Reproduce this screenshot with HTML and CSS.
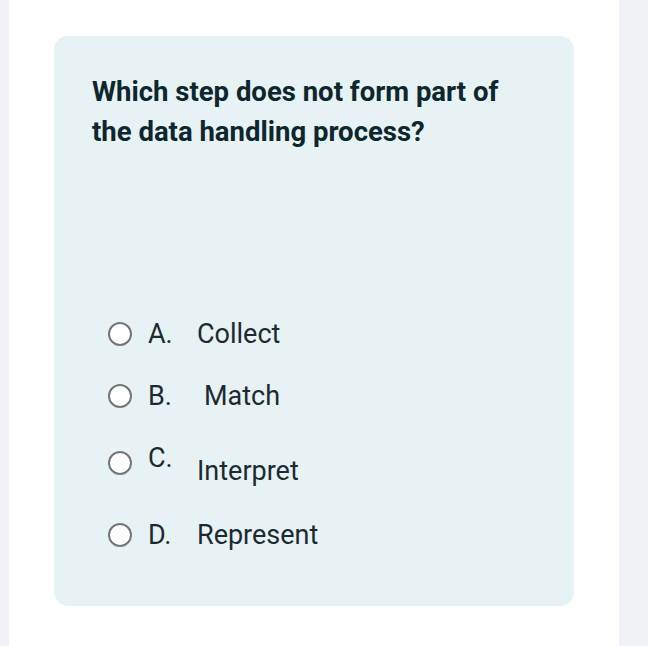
FILE: index.html
```html
<!DOCTYPE html>
<html>
<head>
<meta charset="utf-8">
<link rel="stylesheet" href="styles.css">
</head>
<body>
<div class="page">
  <div class="gutter gutter-left"></div>
  <main class="main">
    <section class="card">
      <h1 class="question">Which step does not form part of the data handling process?</h1>
      <ul class="options">
        <li class="option opt-a"><span class="radio"></span><span class="letter">A.</span><span class="label">Collect</span></li>
        <li class="option opt-b"><span class="radio"></span><span class="letter">B.</span><span class="label label-b">Match</span></li>
        <li class="option opt-c"><span class="radio"></span><span class="letter letter-c">C.</span><span class="label label-c">Interpret</span></li>
        <li class="option opt-d"><span class="radio"></span><span class="letter">D.</span><span class="label">Represent</span></li>
      </ul>
    </section>
  </main>
  <div class="gutter gutter-right"></div>
</div>
</body>
</html>
```

FILE: styles.css
```css
* { box-sizing: border-box; }
html, body { margin: 0; padding: 0; }
body {
  font-family: Roboto, "Liberation Sans", sans-serif;
  background: #ffffff;
}
.page {
  display: flex;
  width: 648px;
  height: 646px;
  overflow: hidden;
}
.gutter { background: #f1f2f6; }
.gutter-left { width: 9px; }
.gutter-right { width: 29px; }
.main {
  flex: 1;
  background: #ffffff;
  padding-top: 36px;
  padding-left: 45px;
}
.card {
  width: 520px;
  height: 570px;
  background: #e7f2f5;
  border-radius: 14px;
  padding: 36px 38px 0 38px;
}
.question {
  margin: 0;
  font-size: 27.5px;
  line-height: 40px;
  font-weight: 700;
  color: #0e262e;
  width: 430px;
}
.options {
  list-style: none;
  margin: 162px 0 0 16px;
  padding: 0;
  display: flex;
  flex-direction: column;
}
.option {
  display: flex;
  align-items: center;
  height: 40px;
  font-size: 27px;
  color: #1d2a31;
}
.opt-b { margin-top: 22px; }
.opt-c { margin-top: 27px; align-items: flex-start; }
.opt-d { margin-top: 32px; }
.radio {
  width: 24px;
  height: 24px;
  border: 2px solid #767676;
  border-radius: 50%;
  background: #ffffff;
  flex: none;
}
.opt-c .radio { margin-top: 8px; }
.letter {
  margin-left: 16px;
  width: 49px;
  flex: none;
}
.letter-c { line-height: 30px; }
.label-b { padding-left: 7px; }
.label-c { margin-top: 12px; line-height: 32px; }
```
